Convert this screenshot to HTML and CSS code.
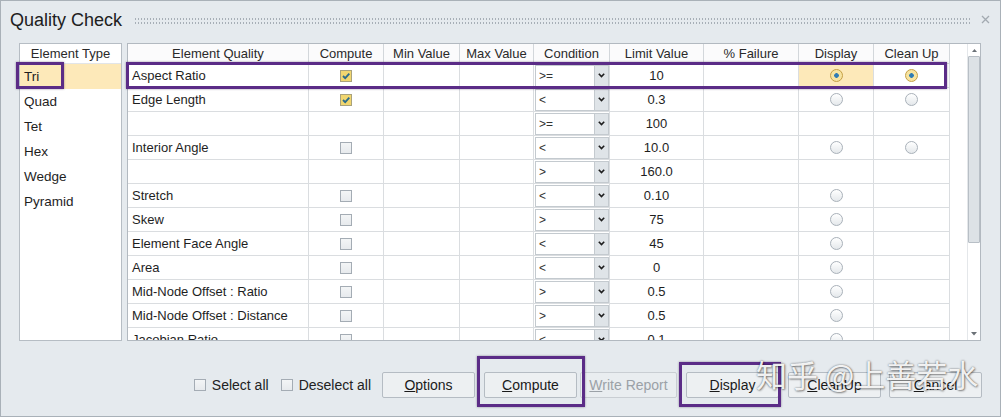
FILE: index.html
```html
<!DOCTYPE html>
<html lang="en">
<head>
    <meta charset="UTF-8">
    <title>Quality Check</title>
    <link rel="stylesheet" href="styles.css">
</head>
<body>
<div class="window">
    <div class="titlebar">
        <span class="title">Quality Check</span>
        <span class="grip"></span>
        <svg class="close" width="9" height="9" viewBox="0 0 9 9"><path d="M1 1 L8 8 M8 1 L1 8" stroke="#a3aab1" stroke-width="1.3" fill="none"/></svg>
    </div>

    <div class="content">
        <!-- element types -->
        <div class="types">
            <div class="types-head">Element Type</div>
            <div class="type selected">Tri</div>
            <div class="type">Quad</div>
            <div class="type">Tet</div>
            <div class="type">Hex</div>
            <div class="type">Wedge</div>
            <div class="type">Pyramid</div>
        </div>

        <!-- quality table -->
        <div class="grid">
            <div class="grid-body">
                <div class="row head">
                    <div class="cell">Element Quality</div>
                    <div class="cell">Compute</div>
                    <div class="cell">Min Value</div>
                    <div class="cell">Max Value</div>
                    <div class="cell">Condition</div>
                    <div class="cell">Limit Value</div>
                    <div class="cell">% Failure</div>
                    <div class="cell">Display</div>
                    <div class="cell">Clean Up</div>
                </div>

                <div class="row">
                    <div class="cell name">Aspect Ratio</div>
                    <div class="cell"><span class="check on"><svg width="10" height="10" viewBox="0 0 10 10"><path d="M2 5 L4.2 7.2 L8.3 2.6" stroke="#2b6c8c" stroke-width="1.8" fill="none"/></svg></span></div>
                    <div class="cell"></div>
                    <div class="cell"></div>
                    <div class="cell cond"><div class="select"><span class="select-text">&gt;=</span><span class="select-btn"><svg width="7" height="5" viewBox="0 0 7 5"><path d="M0.8 0.8 L3.5 3.6 L6.2 0.8" stroke="#1e1e1e" stroke-width="1.6" fill="none"/></svg></span></div></div>
                    <div class="cell">10</div>
                    <div class="cell"></div>
                    <div class="cell picked"><span class="radio on"></span></div>
                    <div class="cell"><span class="radio on"></span></div>
                </div>

                <div class="row">
                    <div class="cell name">Edge Length</div>
                    <div class="cell"><span class="check on"><svg width="10" height="10" viewBox="0 0 10 10"><path d="M2 5 L4.2 7.2 L8.3 2.6" stroke="#2b6c8c" stroke-width="1.8" fill="none"/></svg></span></div>
                    <div class="cell"></div>
                    <div class="cell"></div>
                    <div class="cell cond"><div class="select"><span class="select-text">&lt;</span><span class="select-btn"><svg width="7" height="5" viewBox="0 0 7 5"><path d="M0.8 0.8 L3.5 3.6 L6.2 0.8" stroke="#1e1e1e" stroke-width="1.6" fill="none"/></svg></span></div></div>
                    <div class="cell">0.3</div>
                    <div class="cell"></div>
                    <div class="cell"><span class="radio"></span></div>
                    <div class="cell"><span class="radio"></span></div>
                </div>

                <div class="row">
                    <div class="cell name"></div>
                    <div class="cell"></div>
                    <div class="cell"></div>
                    <div class="cell"></div>
                    <div class="cell cond"><div class="select"><span class="select-text">&gt;=</span><span class="select-btn"><svg width="7" height="5" viewBox="0 0 7 5"><path d="M0.8 0.8 L3.5 3.6 L6.2 0.8" stroke="#1e1e1e" stroke-width="1.6" fill="none"/></svg></span></div></div>
                    <div class="cell">100</div>
                    <div class="cell"></div>
                    <div class="cell"></div>
                    <div class="cell"></div>
                </div>

                <div class="row">
                    <div class="cell name">Interior Angle</div>
                    <div class="cell"><span class="check"></span></div>
                    <div class="cell"></div>
                    <div class="cell"></div>
                    <div class="cell cond"><div class="select"><span class="select-text">&lt;</span><span class="select-btn"><svg width="7" height="5" viewBox="0 0 7 5"><path d="M0.8 0.8 L3.5 3.6 L6.2 0.8" stroke="#1e1e1e" stroke-width="1.6" fill="none"/></svg></span></div></div>
                    <div class="cell">10.0</div>
                    <div class="cell"></div>
                    <div class="cell"><span class="radio"></span></div>
                    <div class="cell"><span class="radio"></span></div>
                </div>

                <div class="row">
                    <div class="cell name"></div>
                    <div class="cell"></div>
                    <div class="cell"></div>
                    <div class="cell"></div>
                    <div class="cell cond"><div class="select"><span class="select-text">&gt;</span><span class="select-btn"><svg width="7" height="5" viewBox="0 0 7 5"><path d="M0.8 0.8 L3.5 3.6 L6.2 0.8" stroke="#1e1e1e" stroke-width="1.6" fill="none"/></svg></span></div></div>
                    <div class="cell">160.0</div>
                    <div class="cell"></div>
                    <div class="cell"></div>
                    <div class="cell"></div>
                </div>

                <div class="row">
                    <div class="cell name">Stretch</div>
                    <div class="cell"><span class="check"></span></div>
                    <div class="cell"></div>
                    <div class="cell"></div>
                    <div class="cell cond"><div class="select"><span class="select-text">&lt;</span><span class="select-btn"><svg width="7" height="5" viewBox="0 0 7 5"><path d="M0.8 0.8 L3.5 3.6 L6.2 0.8" stroke="#1e1e1e" stroke-width="1.6" fill="none"/></svg></span></div></div>
                    <div class="cell">0.10</div>
                    <div class="cell"></div>
                    <div class="cell"><span class="radio"></span></div>
                    <div class="cell"></div>
                </div>

                <div class="row">
                    <div class="cell name">Skew</div>
                    <div class="cell"><span class="check"></span></div>
                    <div class="cell"></div>
                    <div class="cell"></div>
                    <div class="cell cond"><div class="select"><span class="select-text">&gt;</span><span class="select-btn"><svg width="7" height="5" viewBox="0 0 7 5"><path d="M0.8 0.8 L3.5 3.6 L6.2 0.8" stroke="#1e1e1e" stroke-width="1.6" fill="none"/></svg></span></div></div>
                    <div class="cell">75</div>
                    <div class="cell"></div>
                    <div class="cell"><span class="radio"></span></div>
                    <div class="cell"></div>
                </div>

                <div class="row">
                    <div class="cell name">Element Face Angle</div>
                    <div class="cell"><span class="check"></span></div>
                    <div class="cell"></div>
                    <div class="cell"></div>
                    <div class="cell cond"><div class="select"><span class="select-text">&lt;</span><span class="select-btn"><svg width="7" height="5" viewBox="0 0 7 5"><path d="M0.8 0.8 L3.5 3.6 L6.2 0.8" stroke="#1e1e1e" stroke-width="1.6" fill="none"/></svg></span></div></div>
                    <div class="cell">45</div>
                    <div class="cell"></div>
                    <div class="cell"><span class="radio"></span></div>
                    <div class="cell"></div>
                </div>

                <div class="row">
                    <div class="cell name">Area</div>
                    <div class="cell"><span class="check"></span></div>
                    <div class="cell"></div>
                    <div class="cell"></div>
                    <div class="cell cond"><div class="select"><span class="select-text">&lt;</span><span class="select-btn"><svg width="7" height="5" viewBox="0 0 7 5"><path d="M0.8 0.8 L3.5 3.6 L6.2 0.8" stroke="#1e1e1e" stroke-width="1.6" fill="none"/></svg></span></div></div>
                    <div class="cell">0</div>
                    <div class="cell"></div>
                    <div class="cell"><span class="radio"></span></div>
                    <div class="cell"></div>
                </div>

                <div class="row">
                    <div class="cell name">Mid-Node Offset : Ratio</div>
                    <div class="cell"><span class="check"></span></div>
                    <div class="cell"></div>
                    <div class="cell"></div>
                    <div class="cell cond"><div class="select"><span class="select-text">&gt;</span><span class="select-btn"><svg width="7" height="5" viewBox="0 0 7 5"><path d="M0.8 0.8 L3.5 3.6 L6.2 0.8" stroke="#1e1e1e" stroke-width="1.6" fill="none"/></svg></span></div></div>
                    <div class="cell">0.5</div>
                    <div class="cell"></div>
                    <div class="cell"><span class="radio"></span></div>
                    <div class="cell"></div>
                </div>

                <div class="row">
                    <div class="cell name">Mid-Node Offset : Distance</div>
                    <div class="cell"><span class="check"></span></div>
                    <div class="cell"></div>
                    <div class="cell"></div>
                    <div class="cell cond"><div class="select"><span class="select-text">&gt;</span><span class="select-btn"><svg width="7" height="5" viewBox="0 0 7 5"><path d="M0.8 0.8 L3.5 3.6 L6.2 0.8" stroke="#1e1e1e" stroke-width="1.6" fill="none"/></svg></span></div></div>
                    <div class="cell">0.5</div>
                    <div class="cell"></div>
                    <div class="cell"><span class="radio"></span></div>
                    <div class="cell"></div>
                </div>

                <div class="row">
                    <div class="cell name">Jacobian Ratio</div>
                    <div class="cell"><span class="check"></span></div>
                    <div class="cell"></div>
                    <div class="cell"></div>
                    <div class="cell cond"><div class="select"><span class="select-text">&lt;</span><span class="select-btn"><svg width="7" height="5" viewBox="0 0 7 5"><path d="M0.8 0.8 L3.5 3.6 L6.2 0.8" stroke="#1e1e1e" stroke-width="1.6" fill="none"/></svg></span></div></div>
                    <div class="cell">0.1</div>
                    <div class="cell"></div>
                    <div class="cell"><span class="radio"></span></div>
                    <div class="cell"></div>
                </div>
            </div>

            <div class="scrollbar">
                <div class="scroll-arrow"><svg width="5" height="3" viewBox="0 0 5 3"><path d="M0 3 L2.5 0 L5 3 Z" fill="#6b7177"/></svg></div>
                <div class="thumb"></div>
                <div class="scroll-space"></div>
                <div class="scroll-arrow"><svg width="6" height="4" viewBox="0 0 6 4"><path d="M0 0 L3 3.5 L6 0 Z" fill="#6b7177"/></svg></div>
            </div>
        </div>
    </div>

    <div class="footer">
        <label class="opt"><span class="check"></span>Select all</label>
        <label class="opt"><span class="check"></span>Deselect all</label>
        <button class="btn"><u>O</u>ptions</button>
        <button class="btn"><u>C</u>ompute</button>
        <button class="btn off"><u>W</u>rite Report</button>
        <button class="btn"><u>D</u>isplay</button>
        <button class="btn"><u>C</u>leanUp</button>
        <button class="btn last"><u>C</u>ancel</button>
    </div>
</div>

<!-- annotation boxes -->
<div class="mark mark-tri"></div>
<div class="mark mark-row"></div>
<div class="mark mark-compute"></div>
<div class="mark mark-display"></div>

<div class="watermark">知乎 @上善若水</div>
</body>
</html>
```

FILE: styles.css
```css
body {
    margin: 0;
    font-family: "Liberation Sans", Arial, sans-serif;
    color: #1e1e1e;
    background-color: #e5eaee;
}
.window {
    position: relative;
    width: 1001px;
    height: 417px;
    box-sizing: border-box;
    border: 1px solid #a9b1b8;
    background-color: #e5eaee;
}
.titlebar {
    display: flex;
    align-items: center;
    height: 42px;
    padding: 0 10px 0 9px;
}
.title {
    font-size: 18px;
    color: #202020;
    margin-top: -4px;
}
.grip {
    flex: 1;
    height: 7px;
    margin: -4px 10px 0 12px;
    background-image: radial-gradient(circle, #a7afb7 0.9px, transparent 1.1px);
    background-size: 3px 4px;
    background-position: 0 0;
}
.close {
    margin-top: -5px;
}
.content {
    display: flex;
    gap: 5px;
    height: 298px;
    padding: 0 19px 0 18px;
}
.types {
    width: 103px;
    box-sizing: border-box;
    border: 1px solid #b6bdc4;
    background-color: #ffffff;
}
.types-head {
    height: 20px;
    box-sizing: border-box;
    border-bottom: 1px solid #e2e5e8;
    font-size: 13px;
    line-height: 19px;
    text-align: center;
    color: #2a2a2a;
}
.type {
    height: 25px;
    line-height: 26px;
    padding-left: 4px;
    font-size: 13.5px;
}
.type.selected {
    background-color: #fde9b9;
}
.grid {
    flex: 1;
    display: flex;
    box-sizing: border-box;
    border: 1px solid #b2b9c0;
    background-color: #ffffff;
    overflow: hidden;
}
.grid-body {
    width: 839px;
}
.row {
    display: grid;
    grid-template-columns: 181px 75px 76px 74px 76px 94px 95px 75px 76px;
    width: 822px;
    height: 24px;
}
.row.head {
    height: 20px;
}
.cell {
    display: flex;
    align-items: center;
    justify-content: center;
    box-sizing: border-box;
    border-right: 1px solid #dadde0;
    border-bottom: 1px solid #dadde0;
    font-size: 13px;
    white-space: nowrap;
    overflow: hidden;
}
.head .cell {
    background-color: #fbfbfc;
    border-color: #d3d7db;
    color: #2a2a2a;
}
.cell.name {
    justify-content: flex-start;
    padding-left: 4px;
}
.cell.cond {
    justify-content: flex-start;
    padding-left: 1px;
}
.cell.picked {
    background-color: #fde9b9;
}
.select {
    display: flex;
    width: 74px;
    height: 22px;
    box-sizing: border-box;
    border: 1px solid #c4cacf;
    background-color: #ffffff;
}
.select-text {
    flex: 1;
    padding-left: 3px;
    font-size: 12px;
    line-height: 20px;
    color: #333;
}
.select-btn {
    display: flex;
    align-items: center;
    justify-content: center;
    width: 13px;
    background-color: #dfe4e8;
    border-left: 1px solid #c4cacf;
}
.check {
    display: inline-flex;
    align-items: center;
    justify-content: center;
    width: 12px;
    height: 12px;
    box-sizing: border-box;
    border: 1px solid #a4acb4;
    background: linear-gradient(#f3f5f6, #e7eaed);
}
.check.on {
    border-color: #a9a27c;
    background: #f1d66f;
}
.radio {
    display: inline-block;
    width: 13px;
    height: 13px;
    box-sizing: border-box;
    border-radius: 50%;
    border: 1px solid #a9b1b9;
    background: linear-gradient(#ffffff, #e4e8eb);
}
.radio.on {
    border-color: #c59f45;
    background: radial-gradient(circle, #2f7cb4 0, #2f7cb4 2px, #f6e3a0 2.6px);
}
.scrollbar {
    display: flex;
    flex-direction: column;
    width: 13px;
    box-sizing: border-box;
    border-left: 1px solid #e4e7ea;
}
.scroll-arrow {
    display: flex;
    align-items: center;
    justify-content: center;
    height: 12px;
}
.thumb {
    height: 187px;
    box-sizing: border-box;
    border: 1px solid #b8bfc6;
    border-radius: 1px;
    background-color: #dde2e6;
}
.scroll-space {
    flex: 1;
}
.footer {
    display: flex;
    align-items: center;
    justify-content: flex-end;
    height: 26px;
    padding: 31px 18px 0 0;
}
.opt {
    display: flex;
    align-items: center;
    gap: 6px;
    font-size: 14px;
    color: #222;
    margin-right: 12px;
}
.opt + .btn {
    margin-left: -1px;
}
.btn {
    width: 93px;
    height: 26px;
    margin-left: 9px;
    padding: 0;
    box-sizing: border-box;
    border: 1px solid #b5bcc3;
    border-radius: 2px;
    background-color: #edf0f2;
    font-family: "Liberation Sans", Arial, sans-serif;
    font-size: 14px;
    color: #1a1a1a;
}
.btn.off {
    width: 97px;
    margin-left: 3px;
    color: #9ba1a7;
    border-color: #c9ced3;
    background-color: #e9edf0;
}
.btn.last {
    margin-left: 8px;
}
.mark {
    position: absolute;
    box-sizing: border-box;
    border: 3px solid #5b2c87;
    box-shadow: 0 0 2px rgba(40, 20, 60, 0.45);
}
.mark-tri {
    left: 16px;
    top: 62px;
    width: 48px;
    height: 27px;
}
.mark-row {
    left: 126px;
    top: 62px;
    width: 821px;
    height: 27px;
}
.mark-compute {
    left: 477px;
    top: 356px;
    width: 108px;
    height: 51px;
}
.mark-display {
    left: 679px;
    top: 362px;
    width: 102px;
    height: 45px;
}
.watermark {
    position: absolute;
    left: 756px;
    top: 354px;
    font-family: "Noto Sans CJK SC", sans-serif;
    font-size: 31px;
    line-height: 40px;
    color: rgba(255, 255, 255, 0.92);
    text-shadow: 0 0 2px rgba(0, 0, 0, 0.55), 1px 1px 2px rgba(0, 0, 0, 0.35);
    white-space: nowrap;
}
```
